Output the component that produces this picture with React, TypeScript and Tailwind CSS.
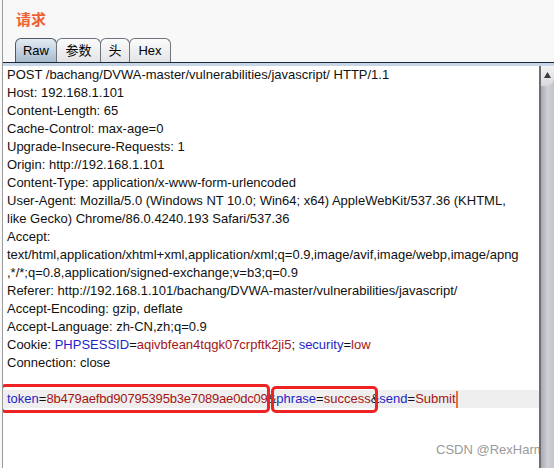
import React from "react";

const font = { fontFamily: '"Liberation Sans", Arial, "Noto Sans CJK SC", sans-serif' };

type Seg = { t: string; c?: "k" | "v"; tight?: boolean };

const K = "text-[#1f1fc8]";
const V = "text-[#a31515]";

const lines: Seg[][] = [
  [{ t: "POST /bachang/DVWA-master/vulnerabilities/javascript/ HTTP/1.1" }],
  [{ t: "Host: 192.168.1.101" }],
  [{ t: "Content-Length: 65" }],
  [{ t: "Cache-Control: max-age=0" }],
  [{ t: "Upgrade-Insecure-Requests: 1" }],
  [{ t: "Origin: http://192.168.1.101" }],
  [{ t: "Content-Type: application/x-www-form-urlencoded" }],
  [{ t: "User-Agent: Mozilla/5.0 (Windows NT 10.0; Win64; x64) AppleWebKit/537.36 (KHTML," }],
  [{ t: "like Gecko) Chrome/86.0.4240.193 Safari/537.36" }],
  [{ t: "Accept:" }],
  [{ t: "text/html,application/xhtml+xml,application/xml;q=0.9,image/avif,image/webp,image/apng" }],
  [{ t: ",*/*;q=0.8,application/signed-exchange;v=b3;q=0.9" }],
  [{ t: "Referer: http://192.168.1.101/bachang/DVWA-master/vulnerabilities/javascript/" }],
  [{ t: "Accept-Encoding: gzip, deflate" }],
  [{ t: "Accept-Language: zh-CN,zh;q=0.9" }],
  [
    { t: "Cookie: " },
    { t: "PHPSESSID", c: "k" },
    { t: "=" },
    { t: "aqivbfean4tqgk07crpftk2ji5", c: "v" },
    { t: "; " },
    { t: "security", c: "k" },
    { t: "=" },
    { t: "low", c: "v" },
  ],
  [{ t: "Connection: close" }],
  [{ t: "" }],
];

const body: Seg[] = [
  { t: "token", c: "k" },
  { t: "=" },
  { t: "8b479aefbd90795395b3e7089ae0dc09", c: "v", tight: true },
  { t: "&" },
  { t: "phrase", c: "k" },
  { t: "=" },
  { t: "success", c: "v" },
  { t: "&" },
  { t: "send", c: "k" },
  { t: "=" },
  { t: "Submit", c: "v" },
];

function Segs({ segs }: { segs: Seg[] }) {
  return (
    <>
      {segs.map((s, i) => (
        <span
          key={i}
          className={`${s.c === "k" ? K : s.c === "v" ? V : ""} ${s.tight ? "tracking-[-0.18px]" : ""}`}
        >
          {s.t}
        </span>
      ))}
    </>
  );
}

function Tab({ label, active, w }: { label: string; active?: boolean; w: string }) {
  return (
    <div
      className={`${w} h-[24px] -ml-px first:ml-0 flex items-center justify-center rounded-t-[6px] border border-b-0 text-[13px] text-black ${
        active
          ? "border-[#4f5866] bg-gradient-to-b from-[#e3ebf3] to-[#a7bbce]"
          : "border-[#6f747c] bg-gradient-to-b from-[#fbfbfb] to-[#e4e4e6]"
      }`}
    >
      {label}
    </div>
  );
}

export default function App() {
  return (
    <div className="w-[554px] h-[468px] overflow-hidden bg-[#f8f8f8]" style={font}>
      <div className="ml-[2px] h-full border-l border-[#9c9c9c] flex flex-col">
        <div className="h-[37px] pl-[13px] pt-[8px]">
          <span
            className="text-[15px] leading-[20px] font-bold text-[#ee6236]"
            style={{ fontFamily: '"Noto Sans CJK SC", sans-serif' }}
          >
            请求
          </span>
        </div>
        <div className="h-[25px] pl-[12px] flex items-end">
          <Tab label="Raw" active w="w-[42px]" />
          <Tab label="参数" w="w-[45px]" />
          <Tab label="头" w="w-[30px]" />
          <Tab label="Hex" w="w-[42px]" />
        </div>
        <div className="h-px bg-[#1d2736]" />
        <div className="h-[3px] bg-[#c6d6e7]" />
        <div className="flex-1 flex min-h-0">
          <div className="relative flex-1 bg-white overflow-hidden text-[13px] leading-[18px] text-[#111]">
            {lines.map((l, i) => (
              <div key={i} className="h-[18px] pl-[4px] whitespace-pre">
                <Segs segs={l} />
              </div>
            ))}
            <div className="relative h-[18px] pl-[4px] whitespace-pre bg-[#efefef] flex items-center">
              <span>
                <Segs segs={body} />
              </span>
              <span className="inline-block w-[2px] h-[17px] bg-[#f07030]" />
            </div>
            <div className="absolute left-[-3px] top-[318px] w-[270px] h-[29px] border-[3px] border-[#ef2323] rounded-[5px]" />
            <div className="absolute left-[268px] top-[320px] w-[107px] h-[27px] border-[3px] border-[#ef2323] rounded-[5px]" />
            <div className="absolute left-[433px] top-[376px] whitespace-pre text-[13px] leading-[16px] text-[#9a9a9a]">
              CSDN @RexHarm
            </div>
          </div>
          <div className="w-[15px] flex flex-col border-l-2 border-[#6e6e72] bg-gradient-to-r from-[#a9a9b0] via-[#cfcfd6] to-[#c4c4cc]">
            <div className="h-[20px] bg-gradient-to-b from-[#f2f2f4] to-[#d8d8de] rounded-br-[8px] flex items-start justify-center pt-[6px]">
              <svg width="7" height="6" viewBox="0 0 7 6">
                <path d="M3.5 0 L7 6 L0 6 Z" fill="#3a3a3a" />
              </svg>
            </div>
          </div>
        </div>
      </div>
    </div>
  );
}
